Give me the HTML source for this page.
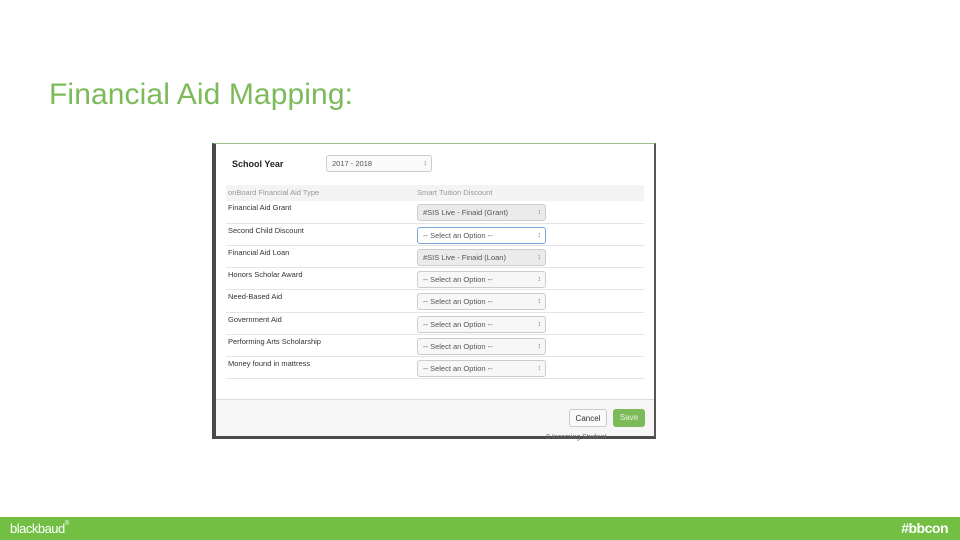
<!DOCTYPE html>
<html><head><meta charset="utf-8"><style>
*{margin:0;padding:0;box-sizing:border-box}
body{width:960px;height:540px;background:#fff;position:relative;overflow:hidden;font-family:"Liberation Sans",sans-serif}
.title{position:absolute;left:49px;top:78px;font-size:30px;color:#7cba5a;letter-spacing:0.1px;white-space:nowrap}
.shot{position:absolute;left:212px;top:143px;width:444px;height:296px;background:#fff;border-left:4px solid #4a4a4a;border-right:2px solid #555;border-top:1px solid #9cbf8c;border-bottom:3px solid #4a4a4a}
.sy{position:absolute;left:16px;top:15px;font-size:9px;font-weight:bold;color:#222}
.sel{position:absolute;height:17px;border:1px solid #ccc;border-radius:3px;background:#f7f7f7;font-size:7.5px;color:#555;padding-left:5px;line-height:15px}
.sel:after{content:"\2195";position:absolute;right:4px;top:0;font-size:7px;color:#777}
.hdr{position:absolute;left:10px;width:418px;top:41px;height:16px;background:#f4f4f4;font-size:7.5px;color:#999;line-height:16px}
.row{position:absolute;left:10px;width:418px;height:22px;border-top:1px solid #e4e4e4;font-size:7.5px;color:#333}
.row span{position:absolute;left:2px;top:2px}
.row .sel{left:191px;top:3px;width:129px}
.foot{position:absolute;left:0;right:0;top:255px;bottom:0;background:#f6f6f6;border-top:1px solid #ddd}
.btn{position:absolute;top:9px;height:18px;border-radius:3px;font-size:8px;line-height:17px;text-align:center}
.bar{position:absolute;left:0;top:517px;width:960px;height:23px;background:#72bf44;color:#fff}
</style></head><body>
<div class="title">Financial Aid Mapping:</div>
<div class="shot">
<div class="sy">School Year</div>
<div class="sel" style="left:110px;top:11px;width:106px;background:#fafafa">2017 - 2018</div>
<div class="hdr"><span style="position:absolute;left:2px">onBoard Financial Aid Type</span><span style="position:absolute;left:191px">Smart Tuition Discount</span></div>
<div class="row" style="top:57px;border-top:none"><span>Financial Aid Grant</span><div class="sel" style="background:#ebebeb">#SIS Live - Finaid (Grant)</div></div>
<div class="row" style="top:79px"><span>Second Child Discount</span><div class="sel" style="border-color:#7aa7d9;background:#fff">-- Select an Option --</div></div>
<div class="row" style="top:101px"><span>Financial Aid Loan</span><div class="sel" style="background:#ebebeb">#SIS Live - Finaid (Loan)</div></div>
<div class="row" style="top:123px"><span>Honors Scholar Award</span><div class="sel">-- Select an Option --</div></div>
<div class="row" style="top:145px"><span>Need-Based Aid</span><div class="sel">-- Select an Option --</div></div>
<div class="row" style="top:168px"><span>Government Aid</span><div class="sel">-- Select an Option --</div></div>
<div class="row" style="top:190px"><span>Performing Arts Scholarship</span><div class="sel">-- Select an Option --</div></div>
<div class="row" style="top:212px"><span>Money found in mattress</span><div class="sel">-- Select an Option --</div></div>
<div class="row" style="top:234px;height:1px"></div>
<div class="foot">
<div class="btn" style="left:353px;width:38px;background:#fafafa;border:1px solid #ccc;color:#333">Cancel</div>
<div class="btn" style="left:397px;width:32px;background:#7dba5a;color:#e8f5e0">Save</div>
<div style="position:absolute;left:330px;top:34px;font-size:7px;color:#666">0 Incoming Student</div>
</div>
</div>
<div class="bar">
<div style="position:absolute;left:10px;top:4px;font-size:13px;letter-spacing:-0.5px">blackbaud<span style="font-size:6px;vertical-align:top">®</span></div>
<div style="position:absolute;right:12px;top:3px;font-size:14px;font-weight:bold;letter-spacing:-0.5px">#bbcon</div>
</div>
</body></html>
